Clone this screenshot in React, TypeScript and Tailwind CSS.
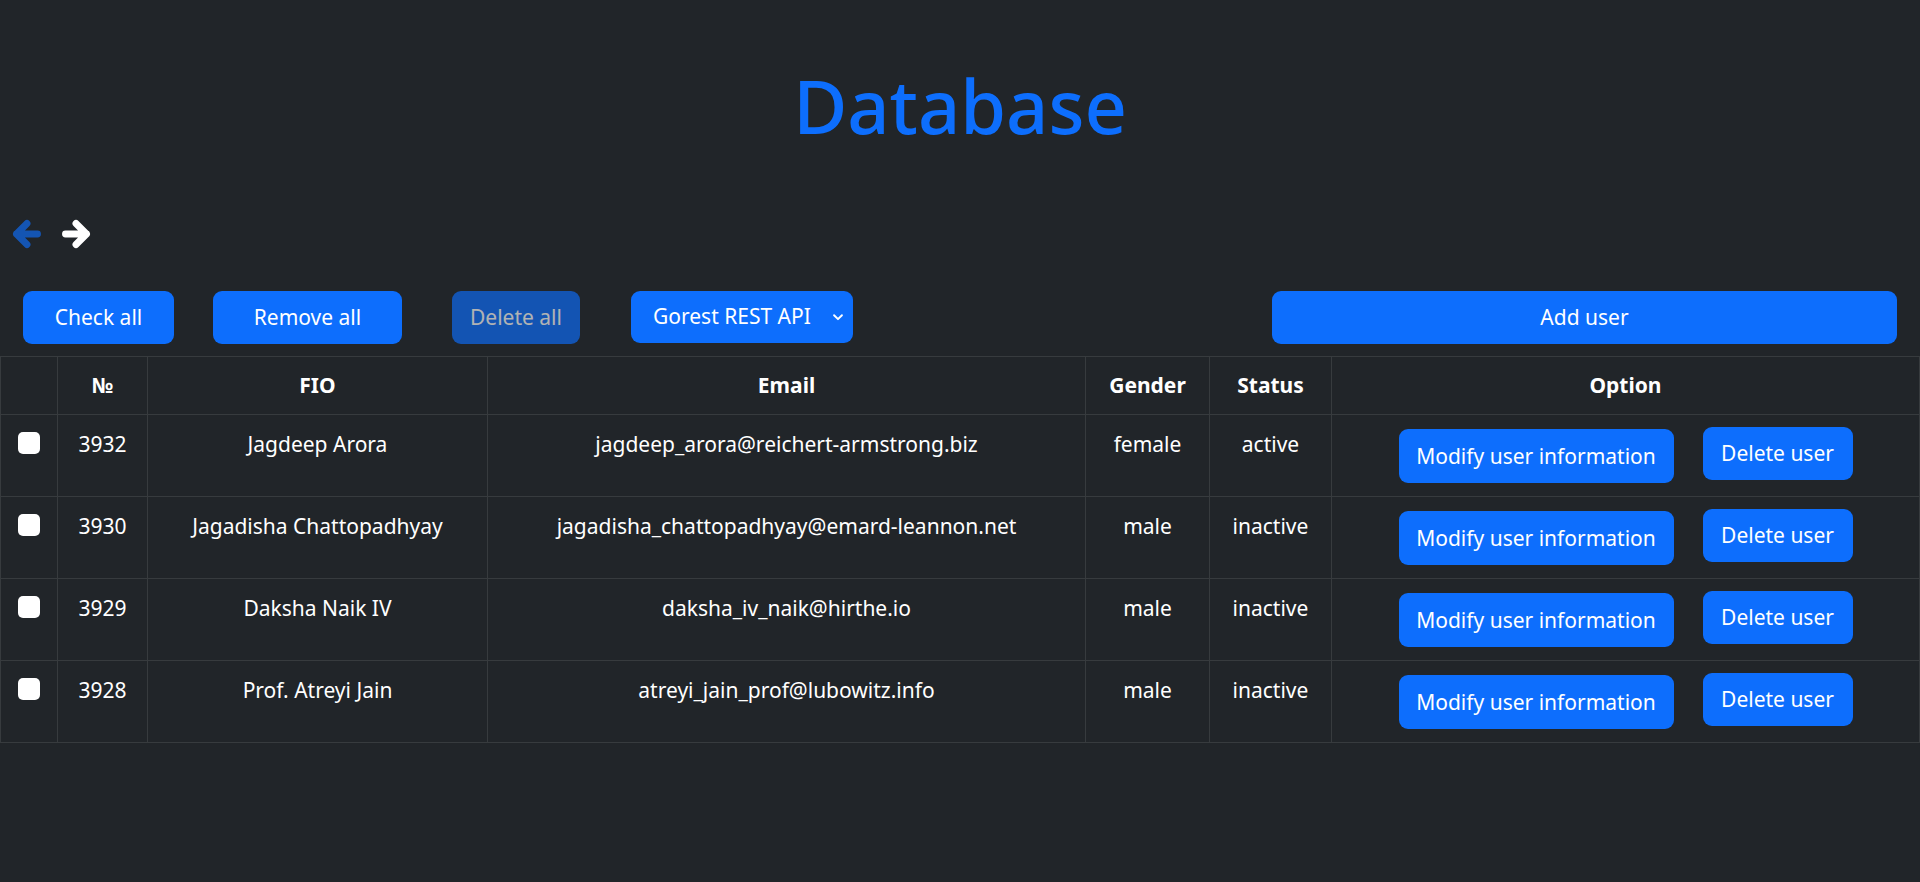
import { useState } from 'react';

type User = {
  id: number;
  name: string;
  email: string;
  gender: string;
  status: string;
};

const users: User[] = [
  { id: 3932, name: 'Jagdeep Arora', email: 'jagdeep_arora@reichert-armstrong.biz', gender: 'female', status: 'active' },
  { id: 3930, name: 'Jagadisha Chattopadhyay', email: 'jagadisha_chattopadhyay@emard-leannon.net', gender: 'male', status: 'inactive' },
  { id: 3929, name: 'Daksha Naik IV', email: 'daksha_iv_naik@hirthe.io', gender: 'male', status: 'inactive' },
  { id: 3928, name: 'Prof. Atreyi Jain', email: 'atreyi_jain_prof@lubowitz.info', gender: 'male', status: 'inactive' },
];

function Arrow({ dir, className }: { dir: 'left' | 'right'; className?: string }) {
  return (
    <svg
      viewBox="0 0 24 24"
      width={36}
      height={36}
      fill="none"
      stroke="currentColor"
      strokeWidth={4.6}
      strokeLinecap="round"
      strokeLinejoin="round"
      className={className}
      aria-hidden="true"
    >
      {dir === 'right' ? <path d="M5 12h14M12 5l7 7-7 7" /> : <path d="M19 12H5M12 19l-7-7 7-7" />}
    </svg>
  );
}

export default function App() {
  const [checked, setChecked] = useState<Record<number, boolean>>({});

  return (
    <div className="min-h-screen bg-[#212529] font-['Noto_Sans',sans-serif] text-white">
      {/* Title */}
      <h1 className="pt-[61px] text-center text-[74px] leading-[90px] font-medium text-[#0d6efd]">Database</h1>

      {/* Pager */}
      <div className="mt-[65px] flex items-center gap-[13px] pl-[9px]">
        <button className="text-[#1455b3]" aria-label="Previous page" disabled>
          <Arrow dir="left" />
        </button>
        <button className="text-white" aria-label="Next page">
          <Arrow dir="right" />
        </button>
      </div>

      {/* Toolbar */}
      <div className="mt-[39px] flex items-start justify-between px-[23px]">
        <div className="flex items-start">
          <button className="h-[53px] w-[151px] rounded-[9px] bg-[#0d6efd] text-[21px]">Check all</button>
          <button className="ml-[39px] h-[53px] w-[189px] rounded-[9px] bg-[#0d6efd] text-[21px]">Remove all</button>
          <button disabled className="ml-[50px] h-[53px] w-[128px] rounded-[9px] bg-[#0d6efd] text-[21px] opacity-65">
            Delete all
          </button>
          <div className="ml-[51px] flex h-[52px] w-[222px] items-center justify-between rounded-[9px] bg-[#0d6efd] pr-[8px] pl-[22px] text-[21px]">
            <span>Gorest REST API</span>
            <svg viewBox="0 0 16 16" width={14} height={14} fill="none" stroke="currentColor" strokeWidth={2.2} strokeLinecap="round" strokeLinejoin="round">
              <path d="M3.5 6l4.5 4.5L12.5 6" />
            </svg>
          </div>
        </div>
        <button className="h-[53px] w-[625px] rounded-[9px] bg-[#0d6efd] text-[21px]">Add user</button>
      </div>

      {/* Users table */}
      <table className="mt-[12px] w-full table-fixed border-collapse border border-[#373b3e] text-center text-[21px] leading-[31px]">
        <colgroup>
          <col className="w-[57px]" />
          <col className="w-[90px]" />
          <col className="w-[340px]" />
          <col className="w-[598px]" />
          <col className="w-[124px]" />
          <col className="w-[122px]" />
          <col />
        </colgroup>
        <thead>
          <tr className="font-bold">
            <th className="border border-[#373b3e] py-[13px]"></th>
            <th className="border border-[#373b3e] py-[13px]">№</th>
            <th className="border border-[#373b3e] py-[13px]">FIO</th>
            <th className="border border-[#373b3e] py-[13px]">Email</th>
            <th className="border border-[#373b3e] py-[13px]">Gender</th>
            <th className="border border-[#373b3e] py-[13px]">Status</th>
            <th className="border border-[#373b3e] py-[13px]">Option</th>
          </tr>
        </thead>
        <tbody>
          {users.map((u) => (
            <tr key={u.id} className="align-top">
              <td className="border border-[#373b3e] pt-[14px] pb-[13px]">
                <input
                  type="checkbox"
                  checked={!!checked[u.id]}
                  onChange={() => setChecked((c) => ({ ...c, [u.id]: !c[u.id] }))}
                  className="mt-[3px] h-[22px] w-[22px] appearance-none rounded-[5px] bg-white align-top"
                />
              </td>
              <td className="border border-[#373b3e] pt-[14px] pb-[13px]">{u.id}</td>
              <td className="border border-[#373b3e] pt-[14px] pb-[13px]">{u.name}</td>
              <td className="border border-[#373b3e] pt-[14px] pb-[13px]">{u.email}</td>
              <td className="border border-[#373b3e] pt-[14px] pb-[13px]">{u.gender}</td>
              <td className="border border-[#373b3e] pt-[14px] pb-[13px]">{u.status}</td>
              <td className="border border-[#373b3e] pt-[12px] pb-[13px]">
                <div className="flex items-start justify-center gap-[29px]">
                  <button className="mt-[2px] h-[54px] w-[275px] rounded-[9px] bg-[#0d6efd]">Modify user information</button>
                  <button className="h-[53px] w-[150px] rounded-[9px] bg-[#0d6efd]">Delete user</button>
                </div>
              </td>
            </tr>
          ))}
        </tbody>
      </table>
    </div>
  );
}
